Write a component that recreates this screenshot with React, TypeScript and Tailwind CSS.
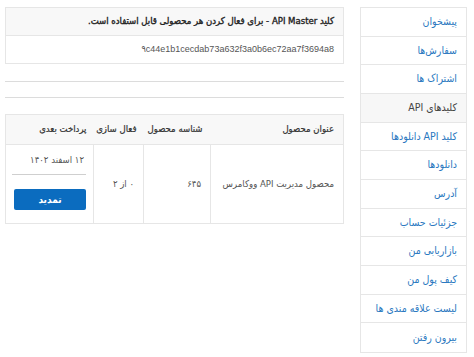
import React from "react";

const menu = [
  "پیشخوان",
  "سفارش‌ها",
  "اشتراک ها",
  "کلیدهای API",
  "کلید API دانلودها",
  "دانلودها",
  "آدرس",
  "جزئیات حساب",
  "بازاریابی من",
  "کیف پول من",
  "لیست علاقه مندی ها",
  "بیرون رفتن",
];

export default function App() {
  return (
    <div
      dir="rtl"
      className="w-[474px] h-[357px] bg-white flex flex-row gap-[16px] pt-[7px] pr-[7px] pl-[5px] text-[10px] text-[#444] font-stretch-condensed whitespace-nowrap"
      style={{ fontFamily: '"DejaVu Sans Condensed", "DejaVu Sans", sans-serif' }}
    >
      <nav className="w-[107px] shrink-0 flex flex-col border border-[#e6e6e6] self-start">
        {menu.map((m, i) => (
          <div
            key={i}
            className={
              "h-[28.67px] flex items-center pr-[9px] text-[10.5px] " +
              (i < menu.length - 1 ? "border-b border-[#e6e6e6] " : "") +
              (i === 3 ? "bg-[#f7f7f7] text-[#444]" : "text-[#2a78c0]")
            }
          >
            {m}
          </div>
        ))}
      </nav>
      <main className="w-[339px] shrink-0 flex flex-col">
        <div className="border border-[#e6e6e6]">
          <div className="h-[28px] bg-[#f8f8f8] border-b border-[#e6e6e6] flex items-center pr-[9px] text-[9.5px] text-[#222] [-webkit-text-stroke:0.35px_#222]">
            کلید API Master - برای فعال کردن هر محصولی قابل استفاده است.
          </div>
          <div
            className="h-[27px] flex items-center pr-[9px] text-[9px] text-[#555]"
            style={{ fontFamily: '"Liberation Sans", "DejaVu Sans", sans-serif' }}
          >
            <span dir="ltr">۹c44e1b1cecdab73a632f3a0b6ec72aa7f3694a8</span>
          </div>
        </div>
        <div className="mt-[17px] h-px bg-[#dcdcdc]" />
        <div className="mt-[15px] h-px bg-[#dcdcdc]" />
        <table className="mt-[16px] w-full border-collapse border border-[#e6e6e6] text-[9.5px] table-fixed">
          <thead>
            <tr className="h-[30px] bg-[#f8f8f8]">
              <th className="w-[133px] text-right pr-[9px] font-normal text-[#333] [-webkit-text-stroke:0.2px_#333] border-b border-[#e6e6e6]">عنوان محصول</th>
              <th className="w-[67px] text-right pr-[8px] font-normal text-[#333] [-webkit-text-stroke:0.2px_#333] border-b border-[#e6e6e6]">شناسه محصول</th>
              <th className="w-[50px] text-right pr-[7px] font-normal text-[#333] [-webkit-text-stroke:0.2px_#333] border-b border-[#e6e6e6]">فعال سازی</th>
              <th className="text-right pr-[7px] font-normal text-[#333] [-webkit-text-stroke:0.2px_#333] border-b border-[#e6e6e6]">پرداخت بعدی</th>
            </tr>
          </thead>
          <tbody>
            <tr className="h-[79px]">
              <td className="pr-[9px] border-l border-[#e6e6e6] text-[#555]">محصول مدیریت API ووکامرس</td>
              <td className="pr-[9px] border-l border-[#e6e6e6] text-[#555]">۶۴۵</td>
              <td className="pr-[9px] border-l border-[#e6e6e6] text-[#555]">۰ از ۲</td>
              <td className="pr-[7px] pl-[6px] align-top pt-[8px]">
                <div className="text-[#555] pb-[7px] border-b border-[#cfcfcf] pr-[2px]">۱۲ اسفند ۱۴۰۲</div>
                <button className="mt-[14px] w-[72px] h-[21px] bg-[#0b6cbf] text-white font-bold text-[10px] rounded-[2px] flex items-center justify-center">
                  تمدید
                </button>
              </td>
            </tr>
          </tbody>
        </table>
      </main>
    </div>
  );
}
